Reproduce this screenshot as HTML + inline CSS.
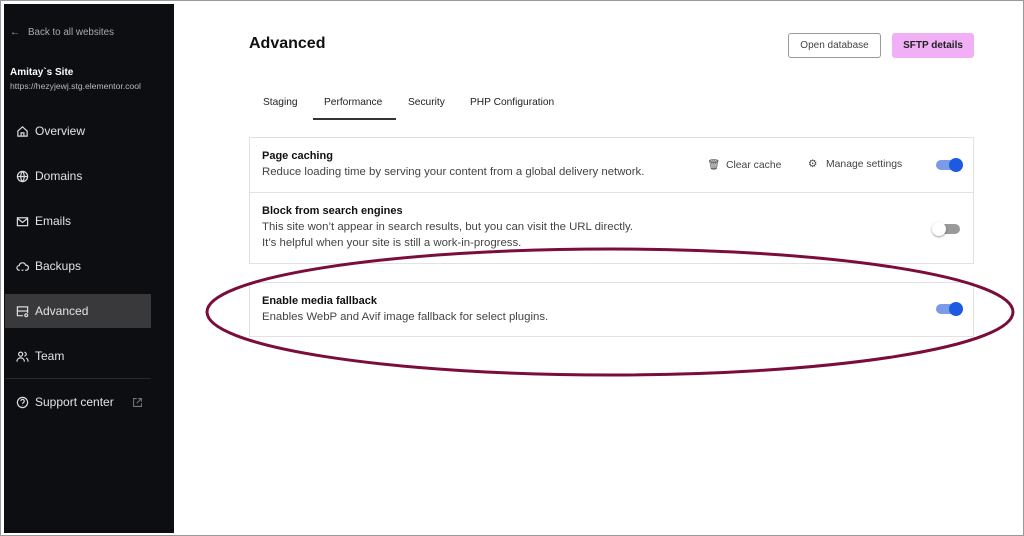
<!DOCTYPE html>
<html><head><meta charset="utf-8"><style>
*{box-sizing:border-box;margin:0;padding:0}
body{width:1024px;height:536px;background:#fff;font-family:"Liberation Sans",sans-serif;position:relative;overflow:hidden}
.frame{position:absolute;left:0;top:0;width:1024px;height:536px;border:1px solid #999}
.side{position:absolute;left:4px;top:4px;width:170px;height:529px;background:#0d0e11;color:#e8e8e8}
.back{position:absolute;left:6px;top:23px;font-size:9.8px;color:#aaa}
.site{position:absolute;left:6px;top:63px;font-size:10px;font-weight:bold;color:#fff}
.url{position:absolute;left:6px;top:77px;font-size:8.6px;color:#bbb}
.nav{position:absolute;left:12px;font-size:12px;color:#e4e4e4;display:flex;align-items:center;gap:6px}
.nav svg{width:13px;height:13px;stroke:#ddd;fill:none;stroke-width:1.3}
.active{position:absolute;left:1px;top:290px;width:146px;height:34px;background:#39393c}
.sep{position:absolute;left:1px;top:374px;width:146px;height:1px;background:#2a2a2d}
h1{position:absolute;left:249px;top:35px;font-size:16px;font-weight:bold;color:#111}
.btn1{position:absolute;left:788px;top:33px;width:93px;height:25px;border:1px solid #999;border-radius:3px;font-size:10px;color:#444;text-align:center;line-height:23px}
.btn2{position:absolute;left:892px;top:33px;width:82px;height:25px;background:#f1b0f5;border-radius:3px;font-size:10px;font-weight:bold;color:#222;text-align:center;line-height:25px}
.tab{position:absolute;top:97px;font-size:10.2px;color:#222}
.tabline{position:absolute;left:313px;top:118px;width:83px;height:2px;background:#333}
.card{position:absolute;left:249px;width:725px;border:1px solid #e2e2e2;background:#fff}
.t{position:absolute;left:12px;font-size:11px;font-weight:bold;color:#111}
.d{position:absolute;left:12px;font-size:11.4px;color:#444;line-height:16px}
.tog{position:absolute;width:26px;height:10px;border-radius:5px}
.tog i{position:absolute;top:-2px;width:14px;height:14px;border-radius:50%}
.on{background:#7b9be8}.on i{right:-1px;background:#1e5ae0}
.off{background:#9a9a9a}.off i{left:-2px;background:#fff;box-shadow:0 1px 2px rgba(0,0,0,.4)}
.act{position:absolute;top:158px;font-size:10.4px;color:#444}
</style></head><body>
<div class="frame"></div>
<div class="side">
<div class="back">←&nbsp;&nbsp;&nbsp;Back to all websites</div>
<div class="site">Amitay`s Site</div>
<div class="url">https://hezyjewj.stg.elementor.cool</div>
<div class="active"></div>
<div class="nav" style="top:120px"><svg viewBox="0 0 14 14"><path d="M2 6.5L7 2l5 4.5V12H2z M5.5 12V8.5h3V12"/></svg>Overview</div>
<div class="nav" style="top:165px"><svg viewBox="0 0 14 14"><circle cx="7" cy="7" r="5.5"/><path d="M1.5 7h11M7 1.5c-2.5 3-2.5 8 0 11M7 1.5c2.5 3 2.5 8 0 11"/></svg>Domains</div>
<div class="nav" style="top:210px"><svg viewBox="0 0 14 14"><rect x="1.5" y="3" width="11" height="8.5"/><path d="M1.5 3.5L7 8l5.5-4.5"/></svg>Emails</div>
<div class="nav" style="top:255px"><svg viewBox="0 0 14 14"><path d="M4 11H3.5a2.5 2.5 0 010-5 3.5 3.5 0 016.8-.5A2.7 2.7 0 0111 11h-1"/><path d="M6 11h2"/></svg>Backups</div>
<div class="nav" style="top:300px"><svg viewBox="0 0 14 14"><rect x="1.5" y="2" width="11" height="4.5"/><path d="M1.5 6.5v5h6M12.5 6.5v2"/><circle cx="11" cy="11" r="1.5"/></svg>Advanced</div>
<div class="sep"></div>
<div class="nav" style="top:345px"><svg viewBox="0 0 14 14"><circle cx="5" cy="4.5" r="2.2"/><path d="M1 12.5c0-2.5 1.8-4 4-4s4 1.5 4 4M9 2.5a2 2 0 010 4M11 8.7c1.3.5 2 1.8 2 3.8"/></svg>Team</div>
<div class="nav" style="top:391px"><svg viewBox="0 0 14 14"><circle cx="7" cy="7" r="5.5"/><path d="M5.3 5.5a1.8 1.8 0 113 1.3c-.8.5-1.3.8-1.3 1.7M7 10v.3"/></svg>Support center<svg viewBox="0 0 14 14" style="margin-left:12px;stroke:#777;width:11px"><path d="M6 2H2v10h10V8M8 2h4v4M12 2L6 8"/></svg></div>
</div>
<h1>Advanced</h1>
<div class="btn1">Open database</div>
<div class="btn2">SFTP details</div>
<div class="tab" style="left:263px">Staging</div>
<div class="tab" style="left:324px">Performance</div>
<div class="tab" style="left:408px">Security</div>
<div class="tab" style="left:470px">PHP Configuration</div>
<div class="tabline"></div>
<div class="card" style="top:137px;height:56px">
<div class="t" style="top:12px">Page caching</div>
<div class="d" style="top:26px">Reduce loading time by serving your content from a global delivery network.</div>
<div class="tog on" style="left:686px;top:22px"><i></i></div>
</div>
<div class="act" style="left:707px">🗑&nbsp;&nbsp;Clear cache</div>
<div class="act" style="left:808px">⚙&nbsp;&nbsp;&nbsp;Manage settings</div>
<div class="card" style="top:192px;height:72px">
<div class="t" style="top:12px">Block from search engines</div>
<div class="d" style="top:26px">This site won’t appear in search results, but you can visit the URL directly.<br>It’s helpful when your site is still a work-in-progress.</div>
<div class="tog off" style="left:684px;top:31px"><i></i></div>
</div>
<div class="card" style="top:282px;height:55px">
<div class="t" style="top:12px">Enable media fallback</div>
<div class="d" style="top:26px">Enables WebP and Avif image fallback for select plugins.</div>
<div class="tog on" style="left:686px;top:21px"><i></i></div>
</div>
<svg style="position:absolute;left:0;top:0" width="1024" height="536"><ellipse cx="610" cy="312" rx="403" ry="63" fill="none" stroke="#7a0d3c" stroke-width="3"/></svg>
</body></html>
